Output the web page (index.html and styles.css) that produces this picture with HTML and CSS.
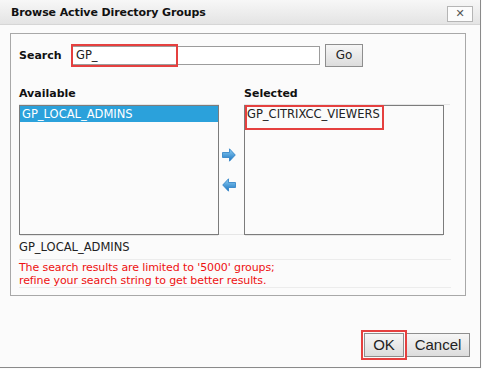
FILE: index.html
```html
<!DOCTYPE html>
<html>
<head>
<meta charset="utf-8">
<link rel="stylesheet" href="styles.css">
</head>
<body>
<div class="dialog">
  <div class="titlebar">
    <span class="title">Browse Active Directory Groups</span>
    <span class="close">✕</span>
  </div>
  <div class="panel">
    <div class="search-row">
      <span class="label">Search</span>
      <span class="search-wrap">
        <span class="input">GP_</span>
        <span class="hl hl-search"></span>
      </span>
      <span class="btn go">Go</span>
    </div>
    <div class="lists">
      <div class="col">
        <div class="label col-head">Available</div>
        <div class="listbox">
          <div class="item sel">GP_LOCAL_ADMINS</div>
        </div>
      </div>
      <div class="arrows">
        <svg class="arrow" width="14" height="14" viewBox="0 0 14 14">
          <defs>
            <linearGradient id="ga" x1="0" y1="0" x2="0" y2="1">
              <stop offset="0" stop-color="#8fd0f5"/>
              <stop offset="1" stop-color="#1a73c0"/>
            </linearGradient>
          </defs>
          <path d="M0.5 4.5 H7.5 V0.8 L13.3 7 L7.5 13.2 V9.5 H0.5 Z" fill="url(#ga)" stroke="#2b7fc4" stroke-width="0.8"/>
        </svg>
        <svg class="arrow" width="14" height="14" viewBox="0 0 14 14">
          <path d="M13.5 4.5 H6.5 V0.8 L0.7 7 L6.5 13.2 V9.5 H13.5 Z" fill="url(#ga)" stroke="#2b7fc4" stroke-width="0.8"/>
        </svg>
      </div>
      <div class="col">
        <div class="label col-head">Selected</div>
        <div class="listbox">
          <div class="item">GP_CITRIXCC_VIEWERS</div>
          <span class="hl hl-sel"></span>
        </div>
      </div>
    </div>
    <div class="status">GP_LOCAL_ADMINS</div>
    <div class="warn">The search results are limited to '5000' groups;<br>refine your search string to get better results.</div>
  </div>
  <div class="footer">
    <span class="ok-wrap"><span class="btn ok">OK</span><span class="hl hl-ok"></span></span>
    <span class="btn cancel">Cancel</span>
  </div>
</div>
</body>
</html>
```
FILE: styles.css
```css
html, body {
  margin: 0;
  padding: 0;
  background: #fbfbfb;
}
body {
  width: 482px;
  height: 369px;
  overflow: hidden;
  font-family: "DejaVu Sans", Verdana, sans-serif;
  font-size: 11px;
  color: #222;
}
.dialog {
  width: 480px;
  height: 367px;
  border-right: 1px solid #8a8a8a;
  border-bottom: 1px solid #8a8a8a;
  background: #fbfbfb;
  display: flex;
  flex-direction: column;
}
.titlebar {
  height: 25px;
  box-sizing: border-box;
  background: linear-gradient(#f7f7f7, #e4e4e4);
  border-bottom: 1px solid #d6d6d6;
  display: flex;
  align-items: center;
  justify-content: space-between;
  padding: 0 7px 0 11px;
}
.title {
  font-weight: bold;
  font-size: 11px;
  color: #111;
  letter-spacing: -0.1px;
}
.close {
  width: 24px;
  height: 14px;
  margin-top: 3px;
  border: 1px solid #b5b5b5;
  background: #fcfcfc;
  font-size: 11px;
  line-height: 14px;
  text-align: center;
  color: #555;
  font-weight: bold;
}
.panel {
  margin: 8px 0 0 10px;
  width: 456px;
  height: 263px;
  box-sizing: border-box;
  border: 1px solid #a8a8a8;
  padding: 10px 0 0 8px;
}
.label {
  font-weight: bold;
  color: #111;
}
.search-row {
  display: flex;
  align-items: center;
  height: 22px;
}
.search-row .label {
  width: 53px;
}
.search-wrap {
  position: relative;
  display: block;
}
.input {
  display: block;
  width: 248px;
  height: 19px;
  box-sizing: border-box;
  border: 1px solid #9c9c9c;
  background: #fff;
  padding-left: 3px;
  line-height: 17px;
  font-size: 11.5px;
}
.hl {
  position: absolute;
  border: 2px solid #e5403f;
  box-sizing: border-box;
  pointer-events: none;
}
.hl-search {
  left: -1px;
  top: -2px;
  width: 107px;
  height: 23px;
}
.btn {
  display: inline-block;
  box-sizing: border-box;
  border: 1px solid #8e8e8e;
  background: linear-gradient(#f6f6f6, #dcdcdc);
  text-align: center;
  color: #222;
}
.go {
  margin-left: 5px;
  width: 38px;
  height: 23px;
  line-height: 21px;
  font-size: 12px;
}
.lists {
  display: flex;
  margin-top: 21px;
  width: 432px;
}
.col {
  display: flex;
  flex-direction: column;
}
.col-head {
  height: 14px;
  line-height: 14px;
  padding-bottom: 3px;
  border-bottom: 1px solid #e6e6e6;
}
.lists .col:last-child .col-head {
  margin-right: -6px;
}
.listbox {
  position: relative;
  width: 200px;
  height: 130px;
  box-sizing: border-box;
  border: 1px solid #7c7c7c;
  background: #fbfbfb;
  box-shadow: 0 2px 0 -1px #e6e6e6;
}
.item {
  height: 16px;
  line-height: 16px;
  padding-left: 2px;
  font-size: 11.5px;
}
.item.sel {
  background: #2ba1db;
  color: #fff;
}
.hl-sel {
  left: 0px;
  top: -1px;
  width: 139px;
  height: 25px;
}
.arrows {
  width: 25px;
  display: flex;
  flex-direction: column;
  align-items: flex-start;
  padding: 44px 0 0 3px;
  gap: 16px;
  border-bottom: 1px solid #e6e6e6;
  margin-top: 17px;
  height: 131px;
  box-sizing: border-box;
}
.arrow {
  display: block;
}
.status {
  margin-top: 5px;
  height: 14px;
  line-height: 14px;
  font-size: 11.5px;
}
.warn {
  margin-top: 5px;
  color: #ee1111;
  font-size: 11px;
  letter-spacing: -0.1px;
  line-height: 13px;
  width: 432px;
  border-top: 1px solid #ececec;
  border-bottom: 1px solid #ececec;
  padding-top: 1px;
}
.footer {
  display: flex;
  justify-content: flex-end;
  align-items: center;
  padding-right: 10px;
  margin-top: 37px;
  gap: 1px;
}
.ok-wrap {
  position: relative;
  display: block;
}
.ok, .cancel {
  height: 24px;
  line-height: 22px;
  font-family: "Liberation Sans", Arial, sans-serif;
  font-size: 15px;
  display: block;
}
.ok {
  width: 40px;
  margin-right: 1px;
}
.cancel {
  width: 64px;
}
.hl-ok {
  left: -3px;
  top: -3px;
  width: 46px;
  height: 30px;
}
```
